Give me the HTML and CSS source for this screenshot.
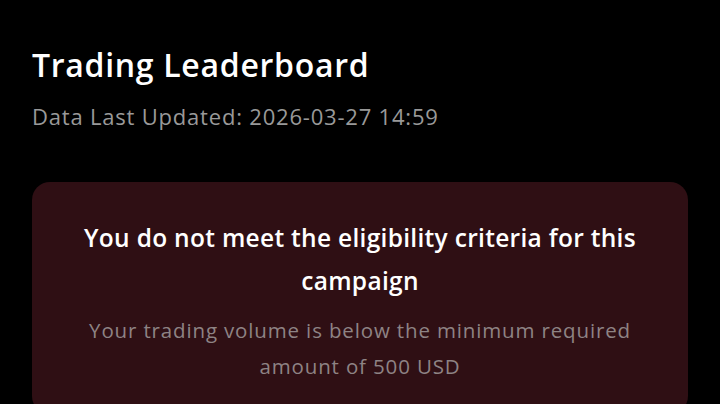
FILE: index.html
```html
<!DOCTYPE html>
<html>
<head>
<meta charset="utf-8">
<link rel="stylesheet" href="styles.css">
</head>
<body>
<main class="page">
  <h1 class="title">Trading Leaderboard</h1>
  <p class="updated">Data Last Updated: 2026-03-27 14:59</p>
  <section class="notice">
    <h2 class="notice-title">You do not meet the eligibility criteria for this campaign</h2>
    <p class="notice-text">Your trading volume is below the minimum required amount of 500 USD</p>
  </section>
</main>
</body>
</html>
```
FILE: styles.css
```css
html, body {
  margin: 0;
  background: #000;
}
body {
  font-family: "Open Sans", "Liberation Sans", sans-serif;
  color: #fff;
}
.page {
  padding: 43px 32px 0 32px;
}
.title {
  margin: 0;
  font-size: 32px;
  font-weight: 600;
  line-height: 44px;
  letter-spacing: 0.7px;
}
.updated {
  margin: 13px 0 0 0;
  font-size: 22px;
  line-height: 32px;
  letter-spacing: 0.8px;
  color: #999999;
}
.notice {
  margin-top: 50px;
  background: #2f0f14;
  border-radius: 18px;
  padding: 34px 40px 30px;
  text-align: center;
}
.notice-title {
  margin: 0;
  font-size: 24.5px;
  font-weight: 600;
  line-height: 43px;
  letter-spacing: 0.3px;
}
.notice-text {
  margin: 10px 0 0 0;
  font-size: 20.5px;
  line-height: 36px;
  letter-spacing: 0.85px;
  color: #8e8384;
}
```
